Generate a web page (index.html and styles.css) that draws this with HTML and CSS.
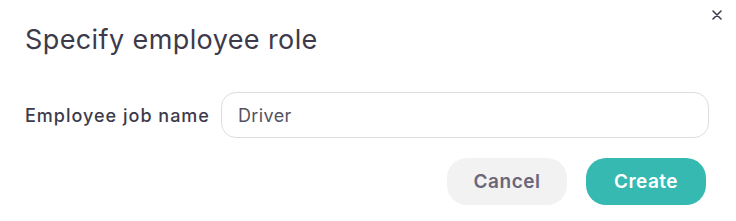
FILE: index.html
```html
<!DOCTYPE html>
<html lang="en">
<head>
    <meta charset="UTF-8">
    <title>Specify employee role</title>
    <link rel="stylesheet" href="styles.css">
</head>
<body>
    <div class="dialog">
        <button class="close-btn" aria-label="Close">
            <svg width="10" height="10" viewBox="0 0 10 10"><path d="M1 1L9 9M9 1L1 9" stroke="#3b3f4f" stroke-width="1.6" stroke-linecap="round"/></svg>
        </button>
        <h2 class="dialog-title">Specify employee role</h2>
        <div class="field-row">
            <label class="field-label" for="job-name">Employee job name</label>
            <input id="job-name" class="field-input" type="text" value="Driver">
        </div>
        <div class="actions">
            <button class="btn btn-cancel">Cancel</button>
            <button class="btn btn-create">Create</button>
        </div>
    </div>
</body>
</html>
```

FILE: styles.css
```css
body {
    margin: 0;
    background: #ffffff;
    font-family: Inter, "Noto Sans", sans-serif;
}

.dialog {
    position: relative;
    width: 736px;
    height: 221px;
    box-sizing: border-box;
    padding: 23px 27px 0 25px;
}

.close-btn {
    position: absolute;
    top: 10px;
    right: 14px;
    width: 10px;
    height: 10px;
    padding: 0;
    border: none;
    background: none;
    display: flex;
    cursor: pointer;
}

.dialog-title {
    margin: 0;
    font-size: 27px;
    font-weight: 400;
    color: #3d3a4b;
    line-height: 34px;
    letter-spacing: 0.4px;
}

.field-row {
    display: flex;
    align-items: center;
    gap: 11px;
    margin-top: 35px;
}

.field-label {
    font-size: 18px;
    font-weight: 500;
    color: #3d3a4b;
    white-space: nowrap;
    letter-spacing: 1px;
}

.field-input {
    flex: 1;
    height: 46px;
    box-sizing: border-box;
    border: 1px solid #dddddd;
    border-radius: 15px;
    padding: 0 16px;
    font-family: inherit;
    font-size: 18px;
    letter-spacing: 0.4px;
    color: #55525f;
    outline: none;
}

.actions {
    display: flex;
    justify-content: flex-end;
    gap: 19px;
    margin-top: 20px;
    padding-right: 3px;
}

.btn {
    width: 120px;
    height: 47px;
    border: none;
    border-radius: 20px;
    font-family: inherit;
    font-size: 19px;
    font-weight: 600;
    letter-spacing: 0.5px;
    cursor: pointer;
}

.btn-cancel {
    background: #f2f2f2;
    color: #6b6678;
}

.btn-create {
    background: #36b9b1;
    color: #ffffff;
}
```
